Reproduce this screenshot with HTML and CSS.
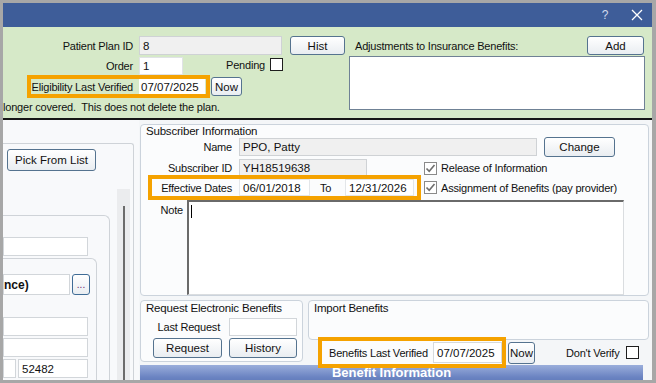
FILE: index.html
```html
<!DOCTYPE html>
<html>
<head>
<meta charset="utf-8">
<link rel="stylesheet" href="styles.css">
</head>
<body>
<div class="window">
  <div class="titlebar">
    <span class="help">?</span>
    <span class="close"><svg width="12" height="12" viewBox="0 0 12 12"><path d="M1 1L11 11M11 1L1 11" stroke="#ffffff" stroke-width="1.3" fill="none"/></svg></span>
  </div>

  <div class="top">
    <div class="top-left">
      <div class="row r1">
        <span class="lbl">Patient Plan ID</span>
        <div class="fld ro plan-id">8</div>
        <button class="btn hist">Hist</button>
      </div>
      <div class="row r2">
        <span class="lbl">Order</span>
        <div class="fld order">1</div>
        <span class="pending">Pending</span>
        <span class="chk dark"></span>
      </div>
      <div class="row r3">
        <div class="hl elig">
          <span class="lbl-e">Eligibility Last Verified</span>
          <div class="fld noborder date-e">07/07/2025</div>
        </div>
        <button class="btn now1">Now</button>
      </div>
      <div class="warn">longer covered.&nbsp; This does not delete the plan.</div>
    </div>
    <div class="top-right">
      <div class="adj-head">
        <span>Adjustments to Insurance Benefits:</span>
        <button class="btn add">Add</button>
      </div>
      <div class="adj-box"></div>
    </div>
  </div>

  <div class="sep"></div>

  <div class="bottom">
    <div class="leftpane">
      <div class="lgroup">
        <button class="btn pick">Pick From List</button>
        <div class="scrollwrap">
          <div class="scontent">
            <div class="gbox g1">
              <div class="fld w85"></div>
              <div class="gbox g2">
                <div class="brow">
                  <div class="fld bold">nce)</div>
                  <button class="btn dots">...</button>
                </div>
                <div class="fld w85 in3"></div>
                <div class="fld w85 in4"></div>
                <div class="brow r5">
                  <div class="fld tiny"></div>
                  <div class="fld zip">52482</div>
                </div>
              </div>
            </div>
          </div>
          <div class="sbar"><div class="sline"></div></div>
        </div>
      </div>
    </div>

    <div class="rightpane">
      <div class="subbox">
        <div class="gtitle">Subscriber Information</div>
        <div class="srow name-row">
          <span class="slbl">Name</span>
          <div class="fld ro name">PPO, Patty</div>
          <button class="btn change">Change</button>
        </div>
        <div class="srow id-row">
          <span class="slbl">Subscriber ID</span>
          <div class="fld ro subid">YH18519638</div>
          <span class="chk checked rel"><svg width="11" height="11" viewBox="0 0 11 11"><path d="M1.5 5.5L4.2 8.3L9.5 2" stroke="#6e6e6e" stroke-width="1.6" fill="none"/></svg></span>
          <span class="cklbl">Release of Information</span>
        </div>
        <div class="srow eff-row">
          <div class="hl eff">
            <span class="lbl-f">Effective Dates</span>
            <div class="fld d1">06/01/2018</div>
            <span class="to">To</span>
            <div class="fld d2">12/31/2026</div>
          </div>
          <span class="chk checked asg"><svg width="11" height="11" viewBox="0 0 11 11"><path d="M1.5 5.5L4.2 8.3L9.5 2" stroke="#6e6e6e" stroke-width="1.6" fill="none"/></svg></span>
          <span class="cklbl">Assignment of Benefits (pay provider)</span>
        </div>
        <div class="srow note-row">
          <span class="nlbl">Note</span>
          <div class="note"><span class="caret"></span></div>
        </div>
      </div>

      <div class="lower">
        <div class="reqbox">
          <div class="gtitle">Request Electronic Benefits</div>
          <div class="qrow">
            <span class="qlbl">Last Request</span>
            <div class="fld lastreq"></div>
          </div>
          <div class="qrow btns">
            <button class="btn req">Request</button>
            <button class="btn histb">History</button>
          </div>
        </div>
        <div class="rcol">
          <div class="impbox">
            <div class="gtitle">Import Benefits</div>
          </div>
          <div class="vrow">
            <div class="hl bver">
              <span class="lbl-b">Benefits Last Verified</span>
              <div class="fld d3">07/07/2025</div>
            </div>
            <button class="btn now2">Now</button>
            <span class="dv">Don't Verify</span>
            <span class="chk dark dvchk"></span>
          </div>
        </div>
      </div>
      <div class="benefit-bar">Benefit Information</div>
    </div>
  </div>
</div>
</body>
</html>
```

FILE: styles.css
```css
* { box-sizing: border-box; }
html, body {
  margin: 0;
  padding: 0;
  width: 656px;
  height: 383px;
  overflow: hidden;
  background: #a7a7a7;
  font-family: "Liberation Sans", Arial, sans-serif;
  font-size: 11px;
  letter-spacing: -0.2px;
  color: #111;
}
.window {
  margin: 3px 0 0 3px;
  width: 649px;
  height: 377px;
  overflow: hidden;
  background: #f4f6f8;
}
.titlebar {
  height: 24px;
  background: #3e5d99;
  display: flex;
  align-items: center;
  justify-content: flex-end;
}
.help {
  width: 20px;
  text-align: center;
  color: #d0dbee;
  font-size: 12px;
  margin-right: 10px;
}
.close {
  width: 24px;
  display: flex;
  justify-content: center;
  margin-right: 3px;
}

/* top green section */
.top {
  height: 91px;
  background: #d6e9c8;
  display: flex;
  padding-top: 9px;
}
.top-left { width: 346px; }
.row { display: flex; align-items: center; }
.lbl { width: 130px; text-align: right; margin-right: 6px; white-space: nowrap; }
.fld {
  display: flex;
  align-items: center;
  padding-left: 3px;
  background: #fff;
  border: 1px solid #d2d6da;
  white-space: nowrap;
  overflow: hidden;
  font-size: 11.5px;
  letter-spacing: 0;
}
.fld.ro { background: #f0f0f0; border-color: #cfd2d5; }
.r1 { height: 19px; }
.plan-id { width: 143px; height: 19px; }
.btn {
  font-family: inherit;
  font-size: 11.5px;
  letter-spacing: 0;
  color: #111;
  padding: 0;
  border: 1px solid #55738f;
  border-radius: 3px;
  background: linear-gradient(#ffffff, #e9edf1);
}
.hist { width: 55px; height: 19px; margin-left: 8px; }
.r2 { height: 18px; margin-top: 2px; }
.order { width: 44px; height: 18px; border-color: #e0e3e6; }
.pending { margin-left: 43px; margin-top: -2px; }
.chk {
  display: inline-flex;
  align-items: center;
  justify-content: center;
  flex: none;
  width: 13px;
  height: 13px;
  background: #fff;
  border: 1px solid #8a8a8a;
}
.chk.dark { border-color: #1e1e1e; }
.r2 .chk { margin-left: 5px; margin-top: -3px; }
.r3 { height: 23px; }
.hl { border: 4px solid #f5a200; display: flex; align-items: center; }
.elig { margin-left: 24px; width: 183px; height: 23px; }
.lbl-e { width: 102px; text-align: right; margin-right: 6px; white-space: nowrap; }
.date-e { width: 66px; height: 15px; border: none; padding-left: 2px; }
.now1 { width: 31px; height: 19px; margin-left: 1px; }
.warn { margin-top: 2px; line-height: 14px; white-space: nowrap; }

.top-right { width: 296px; }
.adj-head { height: 19px; display: flex; align-items: center; justify-content: space-between; padding-left: 6px; }
.add { width: 57px; height: 19px; margin-right: 1px; }
.adj-box { margin-top: 1px; height: 54px; background: #fff; border: 1px solid #6f8195; }

.sep { height: 2px; background: #161616; }

/* bottom */
.bottom { display: flex; height: 260px; }
.leftpane { width: 136px; background: #f8f9fb; }
.lgroup {
  margin-top: 23px;
  width: 131px;
  height: 240px;
  border-top: 1px solid #cfd3d8;
  border-right: 1px solid #cfd3d8;
  border-top-right-radius: 3px;
  background: #f8f9fb;
}
.pick { display: block; width: 89px; height: 22px; margin: 5px 0 0 4px; }
.scrollwrap { display: flex; margin-top: 18px; height: 200px; }
.scontent { width: 114px; }
.sbar { width: 13px; background: #ebecee; display: flex; justify-content: center; }
.sline { width: 2px; background: #6c6c6c; margin-top: 17px; }
.gbox {
  border-top: 1px solid #cfd3d8;
  border-right: 1px solid #cfd3d8;
  border-top-right-radius: 6px;
}
.g1 { margin-top: 26px; width: 107px; padding-top: 21px; height: 200px; }
.w85 { width: 85px; height: 19px; }
.g2 { width: 94px; margin-top: 2px; padding-top: 15px; height: 150px; }
.brow { display: flex; }
.fld.bold { width: 67px; height: 21px; font-weight: bold; font-size: 12px; padding-left: 0; }
.dots { width: 18px; height: 21px; margin-left: 2px; font-size: 10px; line-height: 10px; color: #6a1f6a; border-color: #3f6c96; }
.in3 { margin-top: 22px; }
.in4 { margin-top: 2px; }
.r5 { margin-top: 2px; }
.tiny { width: 13px; height: 19px; }
.zip { width: 70px; height: 19px; margin-left: 2px; }

.rightpane { width: 509px; margin-left: 1px; padding-top: 4px; }
.subbox {
  height: 172px;
  border: 1px solid #cbd3dc;
  border-radius: 4px;
  background: #fbfcfd;
}
.gtitle { padding-left: 5px; line-height: 12px; white-space: nowrap; font-size: 11.5px; }
.srow { display: flex; align-items: center; }
.slbl { width: 91px; text-align: right; margin-right: 7px; white-space: nowrap; }
.name-row { height: 20px; }
.name { width: 298px; height: 18px; }
.change { width: 71px; height: 20px; margin-left: 7px; }
.id-row { height: 18px; margin-top: 2px; }
.subid { width: 128px; height: 18px; }
.rel { margin-left: 57px; }
.cklbl { margin-left: 4px; white-space: nowrap; }
.eff-row { margin-top: -2px; height: 25px; }
.eff { margin-left: 7px; width: 273px; height: 25px; }
.lbl-f { width: 80px; text-align: right; margin-right: 7px; white-space: nowrap; }
.d1 { width: 71px; height: 17px; border-color: #e3e6e9; }
.to { width: 35px; padding-left: 10px; }
.d2 { width: 69px; height: 17px; border-color: #e3e6e9; }
.asg { margin-left: 3px; }
.note-row { align-items: flex-start; height: 95px; }
.nlbl { width: 42px; text-align: right; margin-right: 4px; margin-top: 4px; }
.note {
  width: 437px;
  height: 95px;
  background: #fff;
  border-top: 2px solid #6a6a6a;
  border-left: 2px solid #6a6a6a;
  border-right: 1px solid #dadde0;
  border-bottom: 1px solid #dadde0;
  padding: 3px 0 0 2px;
}
.caret { display: block; width: 1px; height: 13px; background: #000; }

.lower { display: flex; align-items: flex-start; margin-top: 4px; height: 68px; }
.reqbox {
  width: 163px;
  height: 62px;
  border: 1px solid #cbd3dc;
  border-radius: 4px;
  background: #fbfcfd;
  padding-top: 1px;
}
.qrow { display: flex; align-items: center; }
.qlbl { width: 79px; text-align: right; margin-right: 9px; margin-top: 3px; white-space: nowrap; }
.lastreq { width: 68px; height: 18px; margin-top: 4px; }
.btns { margin-top: 2px; }
.req { width: 69px; height: 20px; margin-left: 12px; }
.histb { width: 68px; height: 20px; margin-left: 7px; }
.rcol { width: 341px; margin-left: 5px; }
.impbox {
  height: 40px;
  border: 1px solid #cbd3dc;
  border-radius: 4px;
  background: #fbfcfd;
  padding-top: 1px;
}
.vrow { display: flex; align-items: center; margin-top: -3px; height: 31px; position: relative; z-index: 1; }
.bver { margin-left: 10px; width: 188px; height: 31px; background: #fbfcfd; }
.lbl-b { padding-left: 7px; width: 111px; white-space: nowrap; }
.d3 { width: 69px; height: 21px; border-color: #d6dadd; }
.now2 { width: 27px; height: 22px; margin-left: 2px; }
.dv { margin-left: 31px; white-space: nowrap; }
.dvchk { margin-left: 6px; }
.benefit-bar {
  position: relative;
  margin-top: -3px;
  width: 503px;
  height: 20px;
  background: linear-gradient(#9aaedb, #6b84c2 60%, #5a74b5);
  color: #fff;
  font-weight: bold;
  font-size: 13px;
  letter-spacing: 0;
  text-align: center;
  line-height: 16px;
}
```
